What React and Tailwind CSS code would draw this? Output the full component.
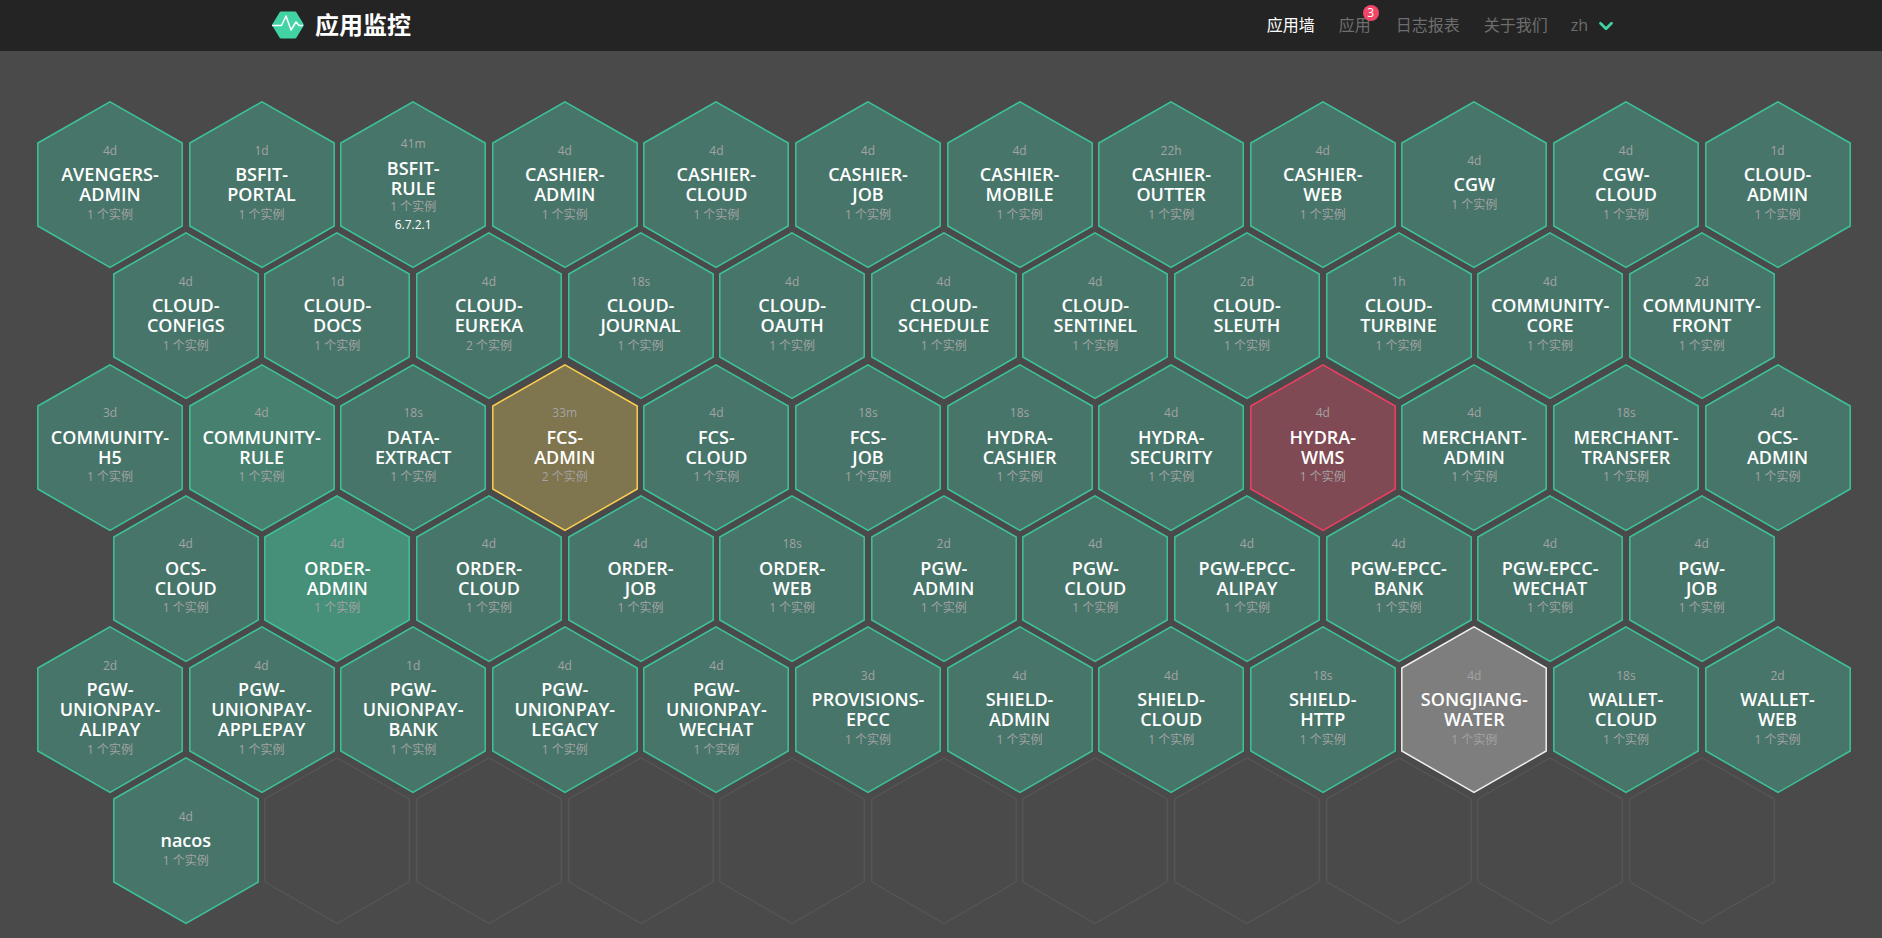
import { ChevronDown } from 'lucide-react';

const rows = [
  [
    ['4d', 'AVENGERS-\nADMIN'], ['1d', 'BSFIT-\nPORTAL'], ['41m', 'BSFIT-\nRULE', 1, 'green', '6.7.2.1'], ['4d', 'CASHIER-\nADMIN'],
    ['4d', 'CASHIER-\nCLOUD'], ['4d', 'CASHIER-\nJOB'], ['4d', 'CASHIER-\nMOBILE'], ['22h', 'CASHIER-\nOUTTER'],
    ['4d', 'CASHIER-\nWEB'], ['4d', 'CGW'], ['4d', 'CGW-\nCLOUD'], ['1d', 'CLOUD-\nADMIN'],
  ],
  [
    ['4d', 'CLOUD-\nCONFIGS'], ['1d', 'CLOUD-\nDOCS'], ['4d', 'CLOUD-\nEUREKA', 2], ['18s', 'CLOUD-\nJOURNAL'],
    ['4d', 'CLOUD-\nOAUTH'], ['4d', 'CLOUD-\nSCHEDULE'], ['4d', 'CLOUD-\nSENTINEL'], ['2d', 'CLOUD-\nSLEUTH'],
    ['1h', 'CLOUD-\nTURBINE'], ['4d', 'COMMUNITY-\nCORE'], ['2d', 'COMMUNITY-\nFRONT'],
  ],
  [
    ['3d', 'COMMUNITY-\nH5'], ['4d', 'COMMUNITY-\nRULE', 1, 'light'], ['18s', 'DATA-\nEXTRACT'], ['33m', 'FCS-\nADMIN', 2, 'yellow'],
    ['4d', 'FCS-\nCLOUD'], ['18s', 'FCS-\nJOB'], ['18s', 'HYDRA-\nCASHIER'], ['4d', 'HYDRA-\nSECURITY'],
    ['4d', 'HYDRA-\nWMS', 1, 'red'], ['4d', 'MERCHANT-\nADMIN'], ['18s', 'MERCHANT-\nTRANSFER'], ['4d', 'OCS-\nADMIN'],
  ],
  [
    ['4d', 'OCS-\nCLOUD'], ['4d', 'ORDER-\nADMIN', 1, 'bright'], ['4d', 'ORDER-\nCLOUD'], ['4d', 'ORDER-\nJOB'],
    ['18s', 'ORDER-\nWEB'], ['2d', 'PGW-\nADMIN'], ['4d', 'PGW-\nCLOUD'], ['4d', 'PGW-EPCC-\nALIPAY'],
    ['4d', 'PGW-EPCC-\nBANK'], ['4d', 'PGW-EPCC-\nWECHAT'], ['4d', 'PGW-\nJOB'],
  ],
  [
    ['2d', 'PGW-\nUNIONPAY-\nALIPAY'], ['4d', 'PGW-\nUNIONPAY-\nAPPLEPAY'], ['1d', 'PGW-\nUNIONPAY-\nBANK'], ['4d', 'PGW-\nUNIONPAY-\nLEGACY'],
    ['4d', 'PGW-\nUNIONPAY-\nWECHAT'], ['3d', 'PROVISIONS-\nEPCC'], ['4d', 'SHIELD-\nADMIN'], ['4d', 'SHIELD-\nCLOUD'],
    ['18s', 'SHIELD-\nHTTP'], ['4d', 'SONGJIANG-\nWATER', 1, 'grey'], ['18s', 'WALLET-\nCLOUD'], ['2d', 'WALLET-\nWEB'],
  ],
  [
    ['4d', 'nacos'], null, null, null, null, null, null, null, null, null, null,
  ],
];

const hexPoints = '73,0.8 145.2,42 145.2,125 73,166.5 0.8,125 0.8,42';

// fill and stroke for each status
const statusStyles = {
  green: 'fill-[#48756a] stroke-[#3dc39a]',
  light: 'fill-[#47806f] stroke-[#3dc39a]',
  bright: 'fill-[#468f78] stroke-[#3dc39a]',
  yellow: 'fill-[#7f754e] stroke-[#fbcf50]',
  red: 'fill-[#804a54] stroke-[#ee3f62]',
  grey: 'fill-[#7e7e7e] stroke-[#efefef]',
  empty: 'fill-transparent stroke-[#5a5a5a]',
};

const Hex = ({ app }) => {
  if (!app) {
    return (
      <div className="w-[146px] h-[168px] shrink-0">
        <svg viewBox="0 0 146 168" className="w-full h-full">
          <polygon points={hexPoints} strokeWidth="1" className={statusStyles.empty} />
        </svg>
      </div>
    );
  }

  const [time, name, count = 1, status = 'green', version] = app;

  return (
    <div className="relative w-[146px] h-[168px] shrink-0">
      <svg viewBox="0 0 146 168" className="absolute inset-0 w-full h-full">
        <polygon points={hexPoints} strokeWidth="1.5" className={statusStyles[status]} />
      </svg>
      <div className={`absolute inset-0 flex flex-col items-center justify-center text-center ${version ? 'pb-px' : 'pb-[5px]'}`}>
        <p className="text-[12px] leading-[18px] mb-[4.5px] text-[#a3a3a3]">{time}</p>
        <p className="text-[18px] leading-[20px] font-semibold text-white whitespace-pre-line">{name}</p>
        <p className={`text-[12px] leading-[18px] text-[#a3a3a3] ${version ? '' : 'mt-[1.5px]'}`}>{count} 个实例</p>
        {version && <p className="text-[12px] leading-[18px] text-white">{version}</p>}
      </div>
    </div>
  );
};

const App = () => {
  return (
    <div className="min-h-screen bg-[#4a4a4a] font-['Open_Sans','Noto_Sans_CJK_SC',sans-serif]">

      {/* Navbar */}
      <nav className="h-[51px] bg-[#242424] flex items-center justify-between pl-[272px] pr-[265px]">
        <div className="flex items-center gap-[11px] pb-[2px]">
          <svg width="32" height="28" viewBox="0 0 32 28">
            <path d="M9 0.5 H23 Q24 0.5 24.5 1.5 L31.5 13 Q32 14 31.5 15 L24.5 26.5 Q24 27.5 23 27.5 H9 Q8 27.5 7.5 26.5 L0.5 15 Q0 14 0.5 13 L7.5 1.5 Q8 0.5 9 0.5 Z" fill="#42d3a5" />
            <path d="M0 14.5 H9.5 L14 5 L19 19 L24 11 L27 14.5 H31" fill="none" stroke="#ffffff" strokeWidth="1.5" strokeLinejoin="round" />
          </svg>
          <span className="text-[24px] leading-none font-bold text-white">应用监控</span>
        </div>
        <div className="flex items-center text-[16px] text-[#6e6e6e]">
          <a className="text-white mr-[24px] pb-[2px]">应用墙</a>
          <a className="relative mr-[25px] pb-[2px]">
            应用
            <span className="absolute -top-[8px] -right-[8px] w-4 h-4 rounded-full bg-[#f14668] text-white text-[12px] leading-4 text-center">3</span>
          </a>
          <a className="mr-[24px] pb-[2px]">日志报表</a>
          <a className="mr-[23px] pb-[2px]">关于我们</a>
          <span className="mr-[7px] pb-[2px]">zh</span>
          <ChevronDown size={22} strokeWidth={3} className="text-[#42d3a5]" />
        </div>
      </nav>

      {/* Wallboard */}
      <main className="pt-[50px] pl-[37px]">
        {rows.map((row, i) => (
          <div key={i} className={`flex gap-[5.6px] ${i > 0 ? '-mt-[36.75px]' : ''} ${i % 2 === 1 ? 'pl-[75.75px]' : ''}`}>
            {row.map((app, j) => <Hex key={j} app={app} />)}
          </div>
        ))}
      </main>
    </div>
  );
};

export default App;
